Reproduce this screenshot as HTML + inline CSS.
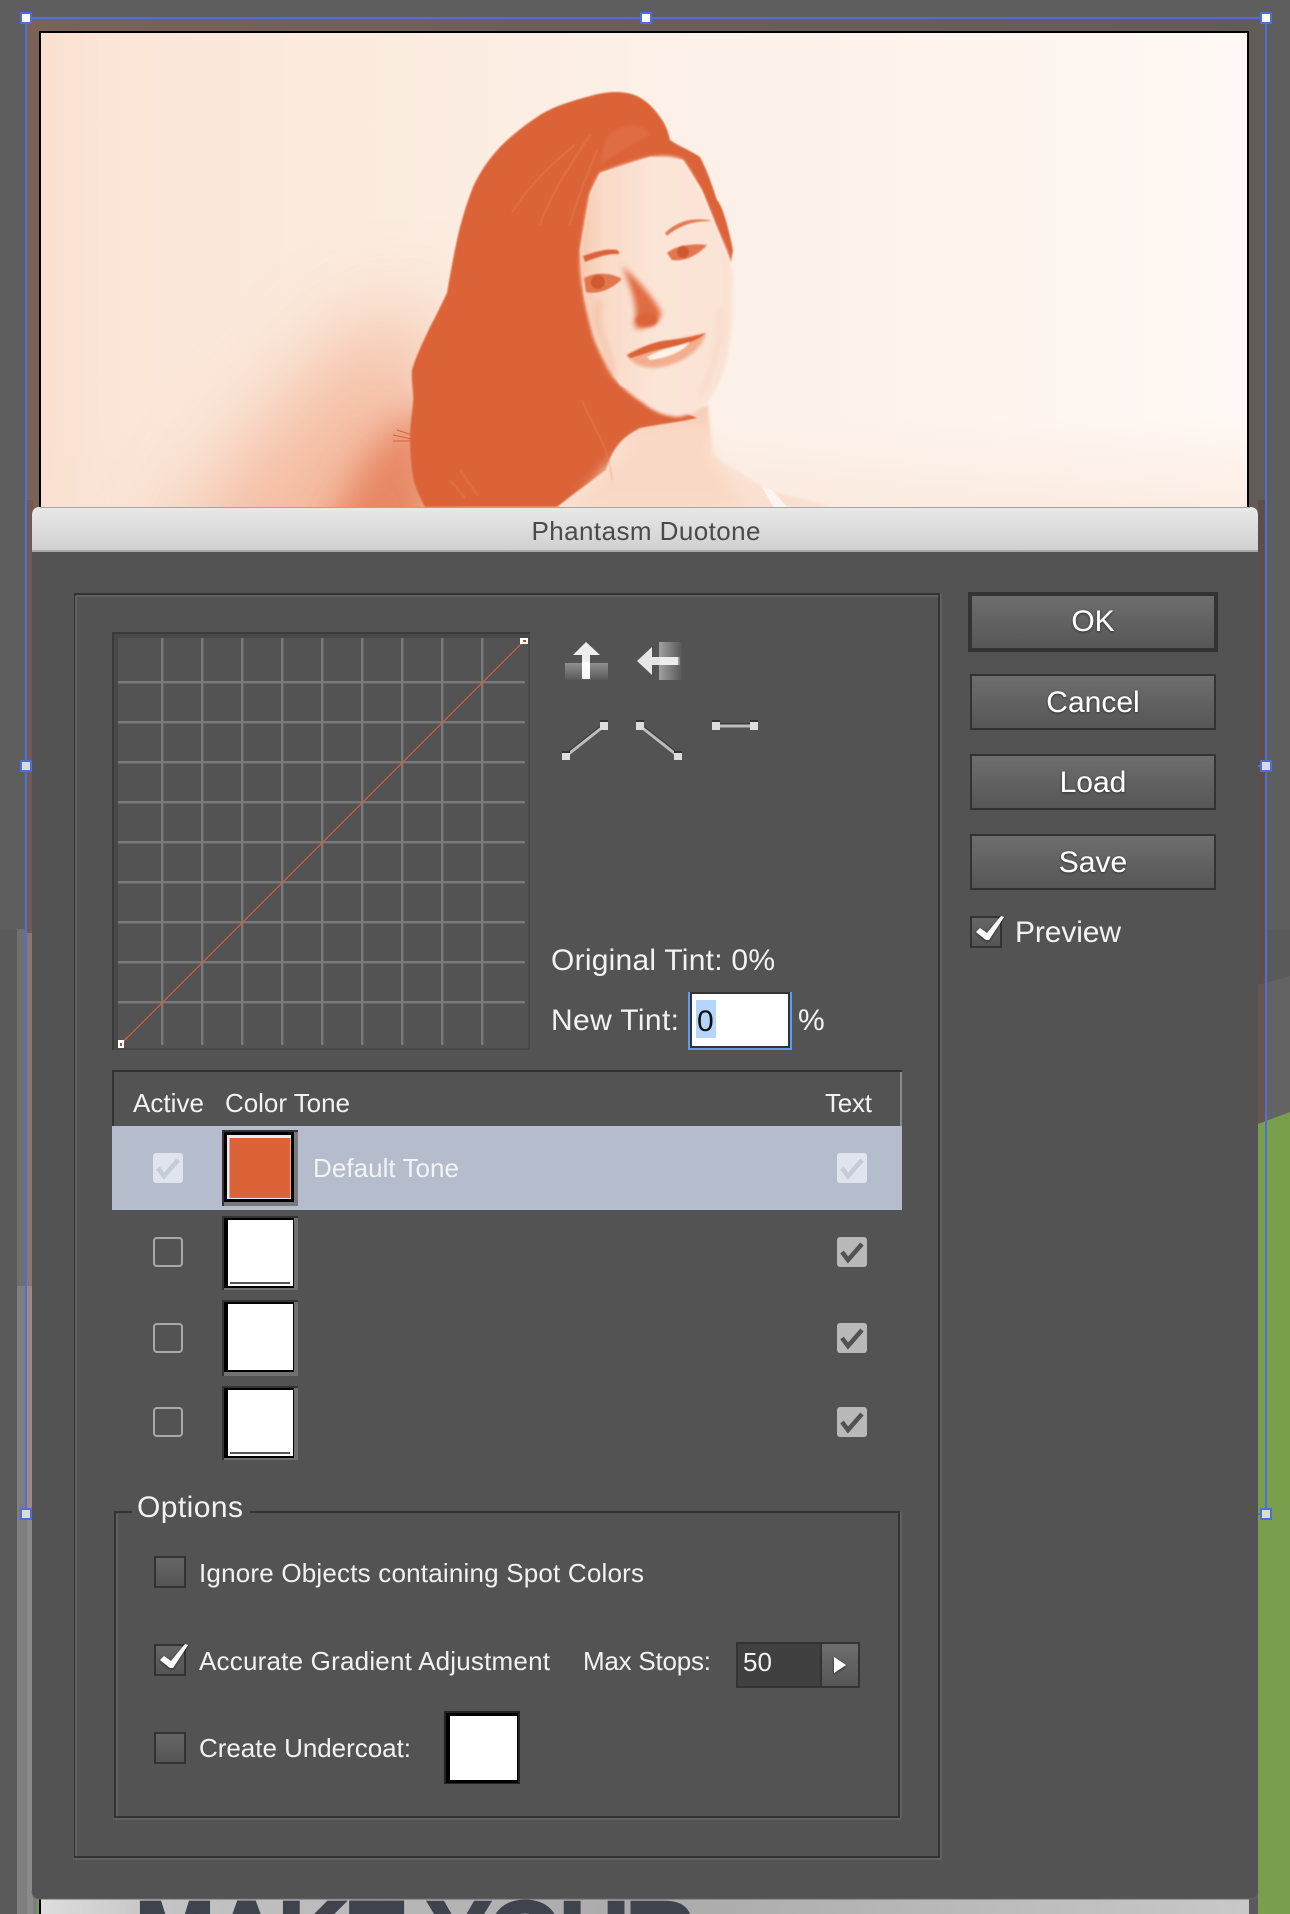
<!DOCTYPE html>
<html><head><meta charset="utf-8"><title>Phantasm Duotone</title>
<style>html,body{margin:0;padding:0;background:#5a5a5a}svg{display:block}
text{font-family:"Liberation Sans",Arial,sans-serif;fill:#f2f2f2;font-size:26px}
.b{font-size:30px;text-anchor:middle;fill:#fff;filter:url(#ts)}.l{font-size:30px}</style></head><body>
<svg xmlns="http://www.w3.org/2000/svg" width="1290" height="1914" viewBox="0 0 1290 1914">
<defs>
<linearGradient id="pb" gradientUnits="userSpaceOnUse" x1="41" x2="1247" y1="0" y2="0"><stop offset="0" stop-color="#fbdfcf"/><stop offset=".05" stop-color="#fbe5d7"/><stop offset=".21" stop-color="#fbeadd"/><stop offset=".5" stop-color="#fcf0e7"/><stop offset="1" stop-color="#fff8f4"/></linearGradient>
<linearGradient id="pf" x1="0" x2="0" y1="0" y2="1"><stop offset="0" stop-color="#f9e2d3" stop-opacity="0"/><stop offset="1" stop-color="#f9e2d3" stop-opacity=".5"/></linearGradient>
<linearGradient id="tb" x1="0" x2="0" y1="0" y2="1"><stop offset="0" stop-color="#e9e9e9"/><stop offset="1" stop-color="#d0d0d0"/></linearGradient>
<linearGradient id="bt" x1="0" x2="0" y1="0" y2="1"><stop offset="0" stop-color="#6e6e6e"/><stop offset="1" stop-color="#565656"/></linearGradient>
<linearGradient id="cb" x1="0" x2="0" y1="0" y2="1"><stop offset="0" stop-color="#666"/><stop offset="1" stop-color="#545454"/></linearGradient>
<linearGradient id="st" x1="0" x2="1" y1="0" y2="0"><stop offset="0" stop-color="#7a6257"/><stop offset=".4" stop-color="#6c5f59"/><stop offset="1" stop-color="#625c59"/></linearGradient>
<linearGradient id="gv" x1="0" x2="0" y1="0" y2="1"><stop offset="0" stop-color="#909090"/><stop offset="1" stop-color="#909090" stop-opacity=".08"/></linearGradient>
<linearGradient id="gh" x1="0" x2="1" y1="0" y2="0"><stop offset="0" stop-color="#a0a0a0"/><stop offset="1" stop-color="#a0a0a0" stop-opacity=".05"/></linearGradient>
<linearGradient id="sv" x1="0" x2="0" y1="0" y2="1"><stop offset="0" stop-color="#fff"/><stop offset="1" stop-color="#fff" stop-opacity=".45"/></linearGradient>
<linearGradient id="sh" x1="0" x2="1" y1="0" y2="0"><stop offset="0" stop-color="#f0f0f0"/><stop offset="1" stop-color="#f0f0f0" stop-opacity=".3"/></linearGradient>
<linearGradient id="dk" x1="0" x2="1" y1="0" y2="0"><stop offset="0" stop-color="#dedede"/><stop offset=".1" stop-color="#c4c4c4"/><stop offset=".5" stop-color="#aaaaaa"/><stop offset="1" stop-color="#c8c8c8"/></linearGradient>
<linearGradient id="neck" x1="0" x2="0" y1="0" y2="1"><stop offset="0" stop-color="#f6ccb4"/><stop offset=".5" stop-color="#fbe2d3"/><stop offset="1" stop-color="#fae0d0"/></linearGradient>
<linearGradient id="face" gradientUnits="userSpaceOnUse" x1="578" x2="735" y1="0" y2="0"><stop offset="0" stop-color="#f5c6aa"/><stop offset=".15" stop-color="#f9dac7"/><stop offset=".5" stop-color="#fbe5d8"/><stop offset="1" stop-color="#fae3d5"/></linearGradient>
<filter id="b45" filterUnits="userSpaceOnUse" x="0" y="0" width="900" height="900"><feGaussianBlur stdDeviation="45"/></filter>
<filter id="b15" filterUnits="userSpaceOnUse" x="0" y="0" width="900" height="800"><feGaussianBlur stdDeviation="18"/></filter>
<filter id="b6" filterUnits="userSpaceOnUse" x="300" y="0" width="700" height="800"><feGaussianBlur stdDeviation="6"/></filter>
<filter id="b3" filterUnits="userSpaceOnUse" x="300" y="0" width="700" height="800"><feGaussianBlur stdDeviation="3"/></filter>
<filter id="b2" filterUnits="userSpaceOnUse" x="300" y="0" width="700" height="800"><feGaussianBlur stdDeviation="1.6"/></filter>
<filter id="b1" filterUnits="userSpaceOnUse" x="300" y="0" width="700" height="800"><feGaussianBlur stdDeviation=".9"/></filter>
<filter id="ts" x="-20%" y="-20%" width="140%" height="140%"><feDropShadow dx="0" dy="1" stdDeviation="1.2" flood-color="#222" flood-opacity=".8"/></filter>
<clipPath id="pc"><rect x="41" y="33" width="1206" height="474"/></clipPath>
</defs>

<!-- artboard background -->
<rect width="1290" height="1914" fill="#5a5a5a"/>
<rect width="1290" height="930" fill="#5e5e5e"/>
<rect x="17" y="929" width="23" height="357" fill="#6f6f6f"/>
<rect x="17" y="1286" width="23" height="628" fill="#7e7e7e"/>
<rect x="27" y="19" width="1238" height="490" fill="url(#st)"/>
<rect x="27" y="500" width="6" height="433" fill="#725a50"/>
<rect x="27" y="933" width="6" height="353" fill="#8c7768"/>
<rect x="27" y="1286" width="6" height="228" fill="#a08a80"/>
<rect x="27" y="1514" width="6" height="400" fill="#8a8a8a"/>
<rect x="1258" y="500" width="7" height="624" fill="#5c4e49"/>
<polygon points="1258,985 1290,976 1290,1113 1258,1124" fill="#636363"/>
<polygon points="1258,985 1265,983 1265,1122 1258,1124" fill="#675650"/>
<polygon points="1258,1124 1290,1112 1290,1914 1258,1914" fill="#7a9f4c"/>
<rect x="37" y="1895" width="2" height="19" fill="#7a9f4c"/>

<!-- poster under dialog -->
<rect x="39" y="1890" width="1210" height="24" fill="url(#dk)"/>
<rect x="39" y="1890" width="2" height="24" fill="#000"/>
<text x="135" y="1968" stroke="#3f434d" stroke-width="3" style="font-size:96px;font-weight:bold;fill:#3f434d" textLength="560">MAKE YOUR</text>

<!-- photo -->
<rect x="39" y="31" width="1210" height="480" fill="#000"/>
<g clip-path="url(#pc)">
<rect x="41" y="33" width="1206" height="474" fill="url(#pb)"/>
<rect x="41" y="420" width="1206" height="90" fill="url(#pf)"/>
<polygon points="150,600 250,440 340,340 430,300 450,600" fill="#f2a988" opacity=".7" filter="url(#b45)"/>
<polygon points="310,560 370,450 425,400 440,560" fill="#e1704a" opacity=".7" filter="url(#b15)"/>
<polygon points="590,430 708,405 712,455 767,490 833,507 557,512" fill="url(#neck)" filter="url(#b2)"/>
<polygon points="762,487 772,490 790,510 775,510" fill="#fdf5ef"/>
<path filter="url(#b1)" fill="#dc6337" d="M627,93 C612,90 596,94 583,98 C565,103 550,108 537,117 C522,127 510,137 500,147 C488,160 480,172 473,187 C466,205 461,222 457,240 C453,258 450,276 447,293 C441,305 436,316 430,327 C423,342 416,356 412,370 C411,382 414,392 413,403 C412,415 410,425 410,437 C410,451 411,465 413,477 C415,488 420,497 425,507 L557,507 C572,495 590,482 606,470 C612,450 620,438 640,428 C660,424 680,422 697,418 L620,385 L596,340 L584,295 L580,250 L590,193 L600,173 L650,157 L683,160 L702,190 L716,225 L731,262 L733,250 C728,225 722,205 717,200 C712,185 707,170 700,157 C690,150 678,146 670,140 C668,130 664,122 660,117 C652,105 640,95 627,93 Z"/>
<path filter="url(#b2)" fill="url(#face)" d="M600,173 C618,166 634,161 650,157 C664,155 675,156 683,160 C696,178 708,205 716,227 C722,240 727,250 730,260 C733,270 734,282 733,293 C733,318 731,340 727,360 C722,378 716,392 707,403 C698,412 688,416 677,417 C664,416 652,411 643,403 C632,396 621,387 613,377 C605,364 598,350 593,337 C589,322 585,308 583,293 C580,278 579,264 580,250 C583,230 586,210 590,193 C593,186 596,179 600,173 Z"/>
<polygon points="575,507 604,470 640,438 705,428 712,458 745,507" fill="#f9d9c5" filter="url(#b6)"/>
<!-- hair texture -->
<g fill="none" stroke="#ea936b" stroke-width="1.2" opacity=".45" filter="url(#b1)">
<path d="M575,145 C550,165 530,185 512,212"/><path d="M590,135 C570,165 550,195 540,225"/><path d="M597,150 C585,180 575,205 570,225"/><path d="M612,480 C610,450 595,430 582,400"/>
<path d="M450,480 L465,498 M460,470 L478,496"/>
</g>
<path d="M605,140 C620,122 640,122 650,135 C638,140 622,150 600,165 Z" fill="#e5805a" opacity=".35" filter="url(#b2)"/>
<path d="M393,435 L412,439 M397,430 L412,435 M393,441 L412,441" stroke="#dc6337" stroke-width="1" fill="none"/>
<!-- features -->
<path d="M583,256 C594,252 607,248 617,250 C621,253 619,255 616,254 C606,254 595,258 585,262 Z" fill="#dc6337" filter="url(#b1)"/>
<path d="M665,233 C672,226 682,221 690,220 C698,219 706,219 712,221 C702,221 695,222 688,224 C680,227 672,231 667,236 Z" fill="#e27a50" filter="url(#b1)"/>
<path d="M584,278 C595,272 610,272 622,279 C612,289 598,295 586,292 Z" fill="#e4764d" filter="url(#b1)"/>
<circle cx="598" cy="282" r="7" fill="#cf5a31" filter="url(#b1)"/>
<path d="M667,253 C675,246 692,243 707,245 C698,255 685,262 672,260 Z" fill="#e4764d" filter="url(#b1)"/>
<circle cx="683" cy="252" r="6" fill="#cf5a31" filter="url(#b1)"/>
<path d="M622,266 C632,275 648,290 660,310 C665,318 655,322 645,327 C637,331 633,328 635,320 C638,305 630,285 622,266 Z" fill="#e06c42" filter="url(#b3)"/>
<ellipse cx="647" cy="320" rx="11" ry="7" fill="#dc6337" filter="url(#b2)"/>
<path d="M627,355 C650,342 680,340 706,333 C702,350 682,365 655,368 C642,368 632,364 627,355 Z" fill="#f2ae8e" filter="url(#b2)"/>
<path d="M627,355 C645,345 658,341 670,340 C682,339 695,336 706,333 C695,343 680,345 667,348 C652,350 640,356 630,358 Z" fill="#dc6337" filter="url(#b1)"/>
<path d="M647,357 C660,349 675,347 690,342 C684,351 668,358 650,360 Z" fill="#fff3ea" filter="url(#b1)"/>
<path d="M600,300 C590,330 618,365 610,375" fill="none" stroke="#f0ac8b" stroke-width="8" opacity=".35" filter="url(#b3)"/>
<path d="M720,310 C722,335 715,370 700,395" fill="none" stroke="#f5cdb5" stroke-width="6" opacity=".4" filter="url(#b3)"/>
</g>

<!-- selection frame -->
<rect x="26" y="18" width="1240" height="1496" fill="none" stroke="#4f6fd8" stroke-width="2"/>
<g fill="#fff" stroke="#4f6fd8" stroke-width="2">
<rect x="21" y="13" width="10" height="10"/><rect x="641" y="13" width="10" height="10"/><rect x="1261" y="13" width="10" height="10"/>
</g>

<!-- dialog -->
<path d="M32,515 Q32,507 40,507 H1250 Q1258,507 1258,515 V1891 Q1258,1899 1250,1899 H40 Q32,1899 32,1891 Z" fill="#535353"/>
<path d="M32,1891 Q32,1899 40,1899 H1250 Q1258,1899 1258,1891" fill="none" stroke="#666" stroke-width="1"/>
<path d="M32,551 V515 Q32,507 40,507 H1250 Q1258,507 1258,515 V551 Z" fill="url(#tb)"/>
<rect x="40" y="507" width="1210" height="1" fill="#a5a5a5"/>
<rect x="32" y="550" width="1226" height="2" fill="#a8a8a8"/>
<text x="646" y="540" text-anchor="middle" textLength="229" style="font-size:26px;fill:#4a4a4a">Phantasm Duotone</text>

<!-- handles over dialog -->
<g fill="#dcdcdc" stroke="#4f6fd8" stroke-width="2">
<rect x="21" y="761" width="10" height="10"/><rect x="1261" y="761" width="10" height="10"/>
<rect x="21" y="1509" width="10" height="10"/><rect x="1261" y="1509" width="10" height="10"/>
</g>
<rect x="1258" y="765" width="3" height="2" fill="#4f6fd8"/>

<!-- main group box -->
<rect x="75" y="594" width="864" height="1263" fill="none" stroke="#333" stroke-width="2"/>
<path d="M76,596 H938 M76,596 V1856 M73,1859 H942 M941,594 V1858" fill="none" stroke="#616161" stroke-width="2"/>

<!-- graph -->
<rect x="112" y="632" width="418" height="418" fill="#484848"/>
<rect x="112" y="632" width="418" height="2" fill="#3a3a3a"/>
<rect x="112" y="632" width="2" height="418" fill="#3a3a3a"/>
<rect x="118" y="638" width="410" height="410" fill="#535353"/>
<g fill="#7a7a7a">
<rect x="161" y="638" width="2.4" height="407"/><rect x="201" y="638" width="2.4" height="407"/><rect x="241" y="638" width="2.4" height="407"/><rect x="281" y="638" width="2.4" height="407"/><rect x="321" y="638" width="2.4" height="407"/><rect x="361" y="638" width="2.4" height="407"/><rect x="401" y="638" width="2.4" height="407"/><rect x="441" y="638" width="2.4" height="407"/><rect x="481" y="638" width="2.4" height="407"/>
<rect x="118" y="681" width="407" height="2.4"/><rect x="118" y="721" width="407" height="2.4"/><rect x="118" y="761" width="407" height="2.4"/><rect x="118" y="801" width="407" height="2.4"/><rect x="118" y="841" width="407" height="2.4"/><rect x="118" y="881" width="407" height="2.4"/><rect x="118" y="921" width="407" height="2.4"/><rect x="118" y="961" width="407" height="2.4"/><rect x="118" y="1001" width="407" height="2.4"/>
</g>
<line x1="122" y1="1043" x2="524" y2="641" stroke="#dc6337" stroke-width="1.4" shape-rendering="crispEdges"/>
<rect x="118" y="1040" width="6" height="8" fill="#fff"/><rect x="120" y="1043" width="2" height="3" fill="#b5492a"/>
<rect x="520" y="638" width="8" height="6" fill="#fff"/><rect x="523" y="640" width="3" height="2" fill="#b5492a"/>

<!-- arrow icons -->
<rect x="565" y="663" width="43" height="17" fill="url(#gv)"/>
<polygon points="586,642 600,655 590,655 590,679 582,679 582,655 573,655" fill="#eee"/>
<rect x="582" y="662" width="8" height="17" fill="url(#sv)"/>
<rect x="659" y="642" width="23" height="38" fill="url(#gh)"/>
<polygon points="637,661 652,647 652,657 678,657 678,665 652,665 652,675" fill="#e6e6e6"/>
<rect x="660" y="657" width="20" height="8" fill="url(#sh)"/>
<!-- curve icons -->
<g stroke="#3a3a3a" stroke-width="2" fill="none"><line x1="566" y1="754" x2="604" y2="724"/><line x1="640" y1="724" x2="678" y2="754"/><line x1="716" y1="724" x2="754" y2="724"/></g>
<g stroke="#bdbdbd" stroke-width="3" fill="none"><line x1="566" y1="756" x2="604" y2="726"/><line x1="640" y1="726" x2="678" y2="756"/><line x1="716" y1="726" x2="754" y2="726"/></g>
<g fill="#333"><rect x="562" y="751" width="8" height="2"/><rect x="600" y="720" width="8" height="2"/><rect x="636" y="720" width="8" height="2"/><rect x="674" y="751" width="8" height="2"/><rect x="712" y="720" width="8" height="2"/><rect x="750" y="720" width="8" height="2"/></g>
<g fill="#ddd"><rect x="562" y="753" width="8" height="7"/><rect x="600" y="722" width="8" height="8"/><rect x="636" y="722" width="8" height="8"/><rect x="674" y="753" width="8" height="7"/><rect x="712" y="722" width="8" height="8"/><rect x="750" y="722" width="8" height="8"/></g>

<!-- tint -->
<text class="l" x="551" y="970" textLength="224">Original Tint: 0%</text>
<text class="l" x="551" y="1030" textLength="128">New Tint:</text>
<rect x="688" y="992" width="104" height="58" fill="#5b9cf0"/>
<rect x="690" y="992" width="100" height="56" fill="#333"/>
<rect x="692" y="994" width="96" height="52" fill="#fff"/>
<rect x="696" y="1000" width="20" height="38" fill="#b5d5fb"/>
<text x="697" y="1031" style="font-size:30px;fill:#111">0</text>
<text class="l" x="798" y="1030">%</text>

<!-- table -->
<rect x="112" y="1070" width="790" height="2" fill="#333"/>
<rect x="112" y="1070" width="2" height="56" fill="#333"/>
<rect x="900" y="1072" width="2" height="54" fill="#8a8a8a"/>
<text x="133" y="1112" textLength="71">Active</text>
<text x="225" y="1112" textLength="125">Color Tone</text>
<text x="825" y="1112" textLength="47">Text</text>
<rect x="112" y="1126" width="790" height="84" fill="#b5bdcc"/>
<text x="313" y="1177" textLength="146" style="fill:#f1f3f6">Default Tone</text>

<!-- swatch rows -->
<g>
<rect x="222" y="1130" width="76" height="76" fill="#7a7a7a"/><rect x="222" y="1130" width="76" height="2" fill="#333"/><rect x="222" y="1130" width="2" height="76" fill="#333"/>
<rect x="224" y="1132" width="70" height="70" fill="#000"/><rect x="227" y="1135" width="64" height="64" fill="#e8edf5"/><rect x="229.5" y="1138" width="61" height="60" fill="#dc6337"/>
<rect x="222" y="1216" width="76" height="74" fill="#717171"/><rect x="222" y="1216" width="76" height="2" fill="#333"/><rect x="222" y="1216" width="2" height="74" fill="#333"/>
<rect x="224" y="1218" width="70" height="70" fill="#000"/><rect x="228" y="1220" width="65" height="66" fill="#fff"/><rect x="230" y="1282" width="60" height="2" fill="#555"/>
<rect x="222" y="1300" width="76" height="76" fill="#717171"/><rect x="222" y="1300" width="76" height="2" fill="#333"/><rect x="222" y="1300" width="2" height="76" fill="#333"/>
<rect x="224" y="1302" width="70" height="70" fill="#000"/><rect x="228" y="1304" width="65" height="66" fill="#fff"/>
<rect x="222" y="1386" width="76" height="74" fill="#717171"/><rect x="222" y="1386" width="76" height="2" fill="#333"/><rect x="222" y="1386" width="2" height="74" fill="#333"/>
<rect x="224" y="1388" width="70" height="70" fill="#000"/><rect x="228" y="1390" width="65" height="66" fill="#fff"/><rect x="230" y="1452" width="60" height="2" fill="#555"/>
</g>
<!-- table checkboxes -->
<rect x="153" y="1153" width="30" height="30" rx="3" fill="#e0e4ec"/><path d="M158,1168 L164,1176 L178,1160" fill="none" stroke="#c5cbd8" stroke-width="4.5"/>
<rect x="837" y="1153" width="30" height="30" rx="3" fill="#e0e4ec"/><path d="M842,1168 L848,1176 L862,1160" fill="none" stroke="#c5cbd8" stroke-width="4.5"/>
<g fill="none" stroke="#a9a9a9" stroke-width="2"><rect x="154" y="1238" width="28" height="28" rx="3"/><rect x="154" y="1324" width="28" height="28" rx="3"/><rect x="154" y="1408" width="28" height="28" rx="3"/></g>
<g fill="#b9b9b9"><rect x="837" y="1237" width="30" height="30" rx="3"/><rect x="837" y="1323" width="30" height="30" rx="3"/><rect x="837" y="1407" width="30" height="30" rx="3"/></g>
<g fill="none" stroke="#525252" stroke-width="4.5"><path d="M842,1252 L848,1260 L862,1244"/><path d="M842,1338 L848,1346 L862,1330"/><path d="M842,1422 L848,1430 L862,1414"/></g>

<!-- options -->
<path d="M132,1512 H115 V1817 H899 V1512 H250" fill="none" stroke="#333" stroke-width="2"/>
<path d="M117,1514 V1816 M113,1819 H901 M901,1512 V1818" fill="none" stroke="#616161" stroke-width="2"/>
<text class="l" x="137" y="1517" textLength="106">Options</text>
<g fill="url(#cb)" stroke="#333" stroke-width="2"><rect x="155" y="1557" width="30" height="30"/><rect x="155" y="1645" width="30" height="30"/><rect x="155" y="1733" width="30" height="30"/><rect x="971" y="917" width="30" height="30"/></g>
<text x="199" y="1582" textLength="445">Ignore Objects containing Spot Colors</text>
<text x="199" y="1670" textLength="351">Accurate Gradient Adjustment</text>
<text x="199" y="1757" textLength="212">Create Undercoat:</text>
<text x="583" y="1670" textLength="128">Max Stops:</text>
<polygon points="160,1660 164,1656 171,1661 185,1644 188,1645 173,1668 170,1668" fill="#fff" filter="url(#ts)"/>
<rect x="444" y="1711" width="76" height="73" fill="#222"/>
<rect x="446" y="1713" width="72" height="70" fill="#000"/>
<rect x="450" y="1716" width="67" height="64" fill="#fff"/>
<!-- spinner -->
<rect x="736" y="1642" width="124" height="46" fill="#333"/>
<rect x="738" y="1644" width="82" height="42" fill="#404040"/>
<rect x="822" y="1644" width="36" height="42" fill="url(#bt)"/>
<text x="743" y="1671" textLength="29">50</text>
<polygon points="834,1657 846,1665 834,1673" fill="#fff" filter="url(#ts)"/>

<!-- buttons -->
<rect x="970" y="594" width="246" height="56" fill="url(#bt)" stroke="#333" stroke-width="4"/>
<rect x="971" y="675" width="244" height="54" fill="url(#bt)" stroke="#333" stroke-width="2"/>
<rect x="971" y="755" width="244" height="54" fill="url(#bt)" stroke="#333" stroke-width="2"/>
<rect x="971" y="835" width="244" height="54" fill="url(#bt)" stroke="#333" stroke-width="2"/>
<text class="b" x="1093" y="631">OK</text>
<text class="b" x="1093" y="712">Cancel</text>
<text class="b" x="1093" y="792">Load</text>
<text class="b" x="1093" y="872">Save</text>
<polygon points="976,932 980,928 987,933 1001,916 1004,917 989,940 986,940" fill="#fff" filter="url(#ts)"/>
<text class="l" x="1015" y="942" textLength="106">Preview</text>
</svg>
</body></html>
